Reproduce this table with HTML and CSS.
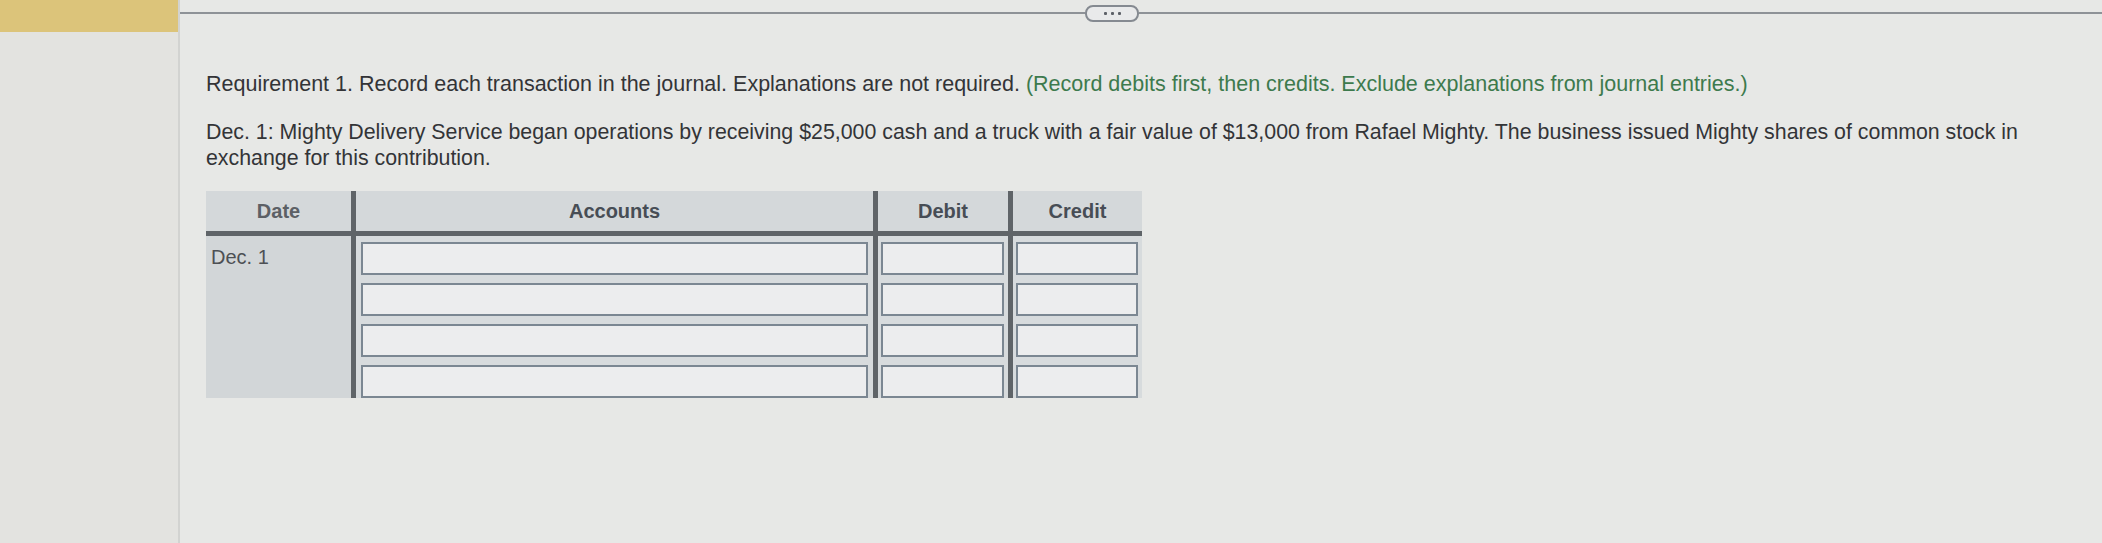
FILE: index.html
```html
<!DOCTYPE html>
<html lang="en">
<head>
<meta charset="utf-8">
<title>Journal entry</title>
<link rel="stylesheet" href="styles.css">
</head>
<body>
<div class="page">
  <aside class="side"><div class="side-top"></div></aside>
  <main class="main">
    <div class="toprule">
      <span class="rule rule-left"></span>
      <span class="pill"><i></i><i></i><i></i></span>
      <span class="rule rule-right"></span>
    </div>
    <p class="req">Requirement 1. Record each transaction in the journal. Explanations are not required. <span class="hint">(Record debits first, then credits. Exclude explanations from journal entries.)</span></p>
    <p class="desc">Dec. 1: Mighty Delivery Service began operations by receiving $25,000 cash and a truck with a fair value of $13,000 from Rafael Mighty. The business issued Mighty shares of common stock in exchange for this contribution.</p>
    <div class="journal">
      <div class="hd hd-date">Date</div>
      <div class="hd">Accounts</div>
      <div class="hd">Debit</div>
      <div class="hd">Credit</div>
      <div class="cell cell-date">Dec. 1</div>
      <div class="cell cell-acc"><span class="inp"></span><span class="inp"></span><span class="inp"></span><span class="inp"></span></div>
      <div class="cell cell-num"><span class="inp"></span><span class="inp"></span><span class="inp"></span><span class="inp"></span></div>
      <div class="cell cell-num"><span class="inp"></span><span class="inp"></span><span class="inp"></span><span class="inp"></span></div>
    </div>
  </main>
</div>
</body>
</html>
```
FILE: styles.css
```css
html, body {
  margin: 0;
  padding: 0;
  height: 100%;
}
body {
  background: #e7e8e6;
  font-family: "Liberation Sans", Arial, sans-serif;
  color: #333437;
}
.page {
  display: flex;
  height: 543px;
}
.side {
  width: 178px;
  flex: 0 0 178px;
  background: #e3e3e0;
  border-right: 2px solid #d2d3d1;
}
.side-top {
  height: 32px;
  background: #dcc47a;
}
.main {
  flex: 1;
  display: flex;
  flex-direction: column;
  padding-left: 26px;
}
.toprule {
  display: flex;
  align-items: center;
  height: 26px;
  margin-left: -26px;
}
.rule {
  height: 2px;
  background: #8e9297;
}
.rule-left {
  flex: 0 0 905px;
}
.rule-right {
  flex: 1;
}
.pill {
  width: 50px;
  height: 13px;
  border: 2px solid #858a91;
  border-radius: 8px;
  background: #e9eaeb;
  display: flex;
  align-items: center;
  justify-content: center;
  gap: 4px;
}
.pill i {
  width: 3px;
  height: 3px;
  background: #5d6168;
  border-radius: 1px;
}
.req {
  margin: 46px 0 0;
  font-size: 21.5px;
  line-height: 25px;
}
.hint {
  color: #3d7a4d;
}
.desc {
  margin: 22px 0 0;
  font-size: 21.35px;
  line-height: 26px;
  width: 1850px;
}
.journal {
  margin-top: 20px;
  width: 936px;
  display: grid;
  grid-template-columns: 145px 517px 130px 129px;
  grid-template-rows: 40px 162px;
  column-gap: 5px;
  row-gap: 5px;
  background: #5f6468;
}
.hd {
  background: #d4d8da;
  display: flex;
  align-items: center;
  justify-content: center;
  font-weight: bold;
  font-size: 20px;
  color: #474d55;
}
.hd-date {
  color: #5c6065;
}
.cell {
  background: #d7dbdd;
}
.cell-date {
  background: #d2d6d8;
  padding: 9px 0 0 5px;
  font-size: 20px;
  line-height: 24px;
  color: #4d5054;
}
.cell-acc,
.cell-num {
  display: flex;
  flex-direction: column;
  gap: 8px;
  padding: 6px 5px 0 5px;
}
.cell-num {
  padding: 6px 4px 0 3px;
}
.inp {
  display: block;
  height: 29px;
  background: #ecedee;
  border: 2px solid #7b8792;
}
```
